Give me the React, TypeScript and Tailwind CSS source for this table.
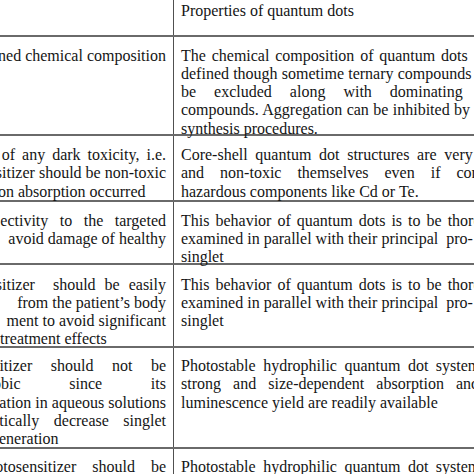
type Line = {
  text: string;
  cls?: string; // word spacing for justified lines
  start?: string; // set for left-aligned last lines
};

type Row = {
  h: string;
  pt: string;
  left: Line[];
  right: Line[];
};

const rows: Row[] = [
  {
    h: 'h-[98.5px]',
    pt: 'pt-[9.5px]',
    left: [{ text: 'defined chemical composition' }],
    right: [
      { text: 'The chemical composition of quantum dots', cls: '[word-spacing:1.8px]' },
      { text: 'defined though sometime ternary compounds', cls: '[word-spacing:0.2px]' },
      { text: 'be excluded along with dominating', cls: '[word-spacing:14px]' },
      { text: 'compounds. Aggregation can be inhibited by', cls: '[word-spacing:0.4px]' },
      { text: 'synthesis procedures.' },
    ],
  },
  {
    h: 'h-[66.5px]',
    pt: 'pt-[10.5px]',
    left: [
      { text: 'of any dark toxicity, i.e.', cls: '[word-spacing:3px]' },
      { text: 'photosensitizer should be non-toxic' },
      { text: 'on absorption occurred', start: '-ml-[2px]' },
    ],
    right: [
      { text: 'Core-shell quantum dot structures are very stable', cls: '[word-spacing:3.7px]' },
      { text: 'and non-toxic themselves even if containing', cls: '[word-spacing:12px]' },
      { text: 'hazardous components like Cd or Te.' },
    ],
  },
  {
    h: 'h-[63px]',
    pt: 'pt-[9.5px]',
    left: [
      { text: 'selectivity to the targeted', cls: '[word-spacing:7.5px]' },
      { text: 'avoid damage of healthy' },
    ],
    right: [
      { text: 'This behavior of quantum dots is to be thoroughly', cls: '[word-spacing:2px]' },
      { text: 'examined in parallel with their principal  pro-' },
      { text: 'singlet' },
    ],
  },
  {
    h: 'h-[83px]',
    pt: 'pt-[10.5px]',
    left: [
      { text: 'photosensitizer  should be easily', cls: '[word-spacing:5px]' },
      { text: 'from the patient\u2019s body' },
      { text: 'ment to avoid significant' },
      { text: 'treatment effects', start: 'ml-0' },
    ],
    right: [
      { text: 'This behavior of quantum dots is to be thoroughly', cls: '[word-spacing:2px]' },
      { text: 'examined in parallel with their principal  pro-' },
      { text: 'singlet' },
    ],
  },
  {
    h: 'h-[101px]',
    pt: 'pt-[9px]',
    left: [
      { text: 'photosensitizer should not be', cls: '[word-spacing:14.5px]' },
      { text: 'hydrophobic since its', cls: '[word-spacing:44.7px]' },
      { text: 'aggregation in aqueous solutions' },
      { text: 'dramatically decrease singlet', cls: '[word-spacing:10.5px]' },
      { text: 'generation', start: '-ml-[9px]' },
    ],
    right: [
      { text: 'Photostable hydrophilic quantum dot systems', cls: '[word-spacing:3.5px]' },
      { text: 'strong and size-dependent absorption and', cls: '[word-spacing:8.1px]' },
      { text: 'luminescence yield are readily available' },
    ],
  },
  {
    h: 'h-[40px]',
    pt: 'pt-[9px]',
    left: [{ text: 'photosensitizer should be', cls: '[word-spacing:12px]' }],
    right: [{ text: 'Photostable hydrophilic quantum dot systems', cls: '[word-spacing:3.5px]' }],
  },
];

function LeftLine({ line }: { line: Line }) {
  if (line.start) {
    return (
      <div className="flex justify-start h-[18.3px]">
        <span className={`whitespace-pre ${line.start}`}>{line.text}</span>
      </div>
    );
  }
  return (
    <div className="flex justify-end h-[18.3px]">
      <span className={`whitespace-pre shrink-0 ${line.cls ?? ''}`}>{line.text}</span>
    </div>
  );
}

function RightLine({ line }: { line: Line }) {
  return <div className={`whitespace-pre h-[18.3px] ${line.cls ?? ''}`}>{line.text}</div>;
}

export default function App() {
  return (
    <div className="w-[474px] h-[474px] overflow-hidden bg-white text-[#151515] font-['Liberation_Serif',serif] text-[16px] leading-[18.3px]">
      {/* header row */}
      <div className="flex h-[37px] border-b-2 border-[#6a6a6a]">
        <div className="w-[174px] shrink-0 border-r-[1.5px] border-[#505050]" />
        <div className="pl-[7px] pt-[1.5px] whitespace-pre">Properties of quantum dots</div>
      </div>

      {rows.map((row, i) => (
        <div key={i} className={`flex ${row.h} border-b-2 border-[#6a6a6a]`}>
          <div className={`w-[174px] shrink-0 pr-[7px] ${row.pt} border-r-[1.5px] border-[#505050]`}>
            {row.left.map((l, j) => (
              <LeftLine key={j} line={l} />
            ))}
          </div>
          <div className={`w-[340px] shrink-0 pl-[7px] ${row.pt}`}>
            {row.right.map((l, j) => (
              <RightLine key={j} line={l} />
            ))}
          </div>
        </div>
      ))}
    </div>
  );
}
